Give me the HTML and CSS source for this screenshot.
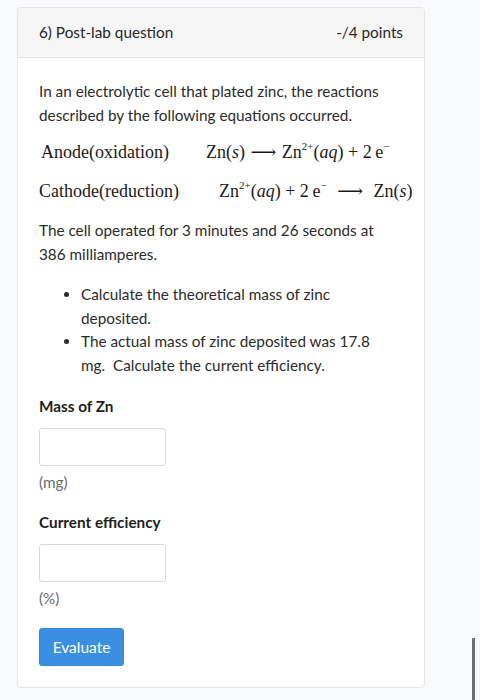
FILE: index.html
```html
<!DOCTYPE html>
<html>
<head>
<meta charset="utf-8">
<link rel="stylesheet" href="styles.css">
</head>
<body>
<div class="card">
  <div class="card-header">
    <span>6) Post-lab question</span>
    <span>-/4 points</span>
  </div>
  <div class="card-body">
    <p class="intro">In an electrolytic cell that plated zinc, the reactions described by the following equations occurred.</p>
    <div class="math">
      <span class="label label-a">Anode(oxidation)</span>
      <span class="eq eq-a">Zn(<i>s</i>) <span class="arrow">⟶</span> Zn<sup>2+</sup>(<i>aq</i>) + 2&thinsp;e<sup>−</sup></span>
      <span class="label">Cathode(reduction)</span>
      <span class="eq eq-c">Zn<sup>2+</sup>(<i>aq</i>) + 2&thinsp;e<sup>−</sup> <span class="arrow">⟶</span> Zn(<i>s</i>)</span>
    </div>
    <p class="cond">The cell operated for 3 minutes and 26 seconds at 386 milliamperes.</p>
    <ul class="tasks">
      <li>Calculate the theoretical mass of zinc deposited.</li>
      <li>The actual mass of zinc deposited was 17.8 mg.&nbsp; Calculate the current efficiency.</li>
    </ul>
    <div class="field field-first">
      <div class="field-label">Mass of Zn</div>
      <div class="input"></div>
      <div class="unit">(mg)</div>
    </div>
    <div class="field">
      <div class="field-label">Current efficiency</div>
      <div class="input"></div>
      <div class="unit">(%)</div>
    </div>
    <button class="btn">Evaluate</button>
  </div>
</div>
<div class="scrollbar"></div>
</body>
</html>
```
FILE: styles.css
```css
html, body {
  margin: 0;
  padding: 0;
  background: #f8f9fa;
}
body {
  padding: 7px 0 12px 17px;
  font-family: Lato, "Open Sans", sans-serif;
  font-size: 15.3px;
  color: #2b2b2b;
}
.card {
  width: 406px;
  background: #fff;
  border: 1px solid #e3e4e6;
  border-radius: 4px;
}
.card-header {
  display: flex;
  justify-content: space-between;
  align-items: center;
  padding: 0 21px 1px 21px;
  box-sizing: border-box;
  height: 50px;
  background: #f6f6f6;
  border-bottom: 1px solid #e3e4e6;
  border-radius: 4px 4px 0 0;
  color: #262626;
}
.card-body {
  padding: 21px 21px 21px 21px;
}
p {
  margin: 0;
  line-height: 24px;
}
.intro {
  width: 350px;
}
.math {
  display: grid;
  grid-template-columns: 167px max-content;
  row-gap: 15px;
  margin-top: 13px;
  font-family: "Liberation Serif", "DejaVu Serif", serif;
  font-size: 18px;
  line-height: 24px;
  color: #1a1a1a;
  white-space: nowrap;
}
.label-a {
  padding-left: 2px;
}
.eq-c {
  padding-left: 13px;
}
.math sup {
  font-size: 11px;
  line-height: 0;
  position: relative;
  top: -1px;
}
.arrow {
  margin: 0 1px;
}
.eq-c .arrow {
  margin: 0 6px;
}
.cond {
  margin-top: 15px;
  width: 350px;
}
.tasks {
  margin: 17px 0 0 0;
  padding-left: 42px;
  line-height: 23.5px;
  width: 300px;
}
.field-first {
  margin-top: 17px;
}
.field {
  margin-bottom: 16px;
}
.field-label {
  font-weight: bold;
  line-height: 24px;
  color: #1e1e1e;
}
.input {
  margin-top: 10px;
  width: 125px;
  height: 36px;
  border: 1px solid #d9d9d9;
  border-radius: 3px;
  background: #fff;
}
.unit {
  margin-top: 4px;
  line-height: 24px;
  color: #6c6c6c;
}
.btn {
  display: block;
  margin-top: 18px;
  width: 85px;
  height: 38px;
  padding: 0;
  background: #3b8fe2;
  color: #fff;
  border: 1px solid #3587d9;
  border-radius: 3px;
  font-family: Lato, "Open Sans", sans-serif;
  font-size: 15.5px;
}
.scrollbar {
  position: fixed;
  left: 472px;
  top: 638px;
  width: 3px;
  height: 62px;
  background: #707070;
}
```
